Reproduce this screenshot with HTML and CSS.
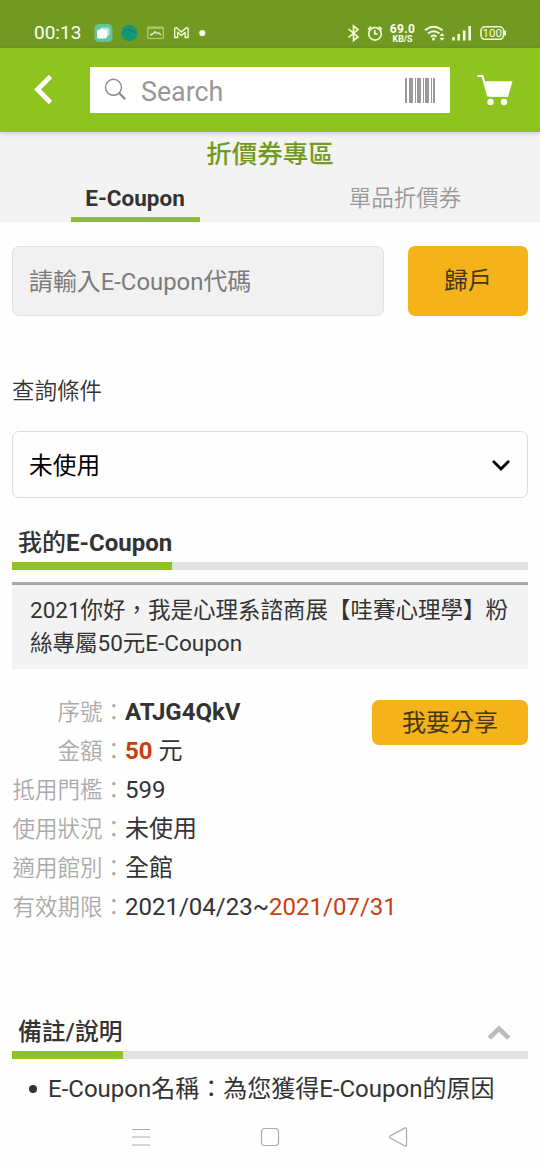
FILE: index.html
```html
<!DOCTYPE html>
<html lang="zh-Hant">
<head>
<meta charset="utf-8">
<title>折價券專區</title>
<link rel="stylesheet" href="styles.css">
</head>
<body>
<div class="statusbar">
  <span class="clock">00:13</span>
  <svg class="notices" width="114" height="20" viewBox="94 23 114 20" fill="none">
    <rect x="94.5" y="24" width="18" height="18" rx="4.5" fill="#62c596"/>
    <rect x="100" y="27.500" width="9.500" height="8.500" rx="2" fill="#b5ecd5"/>
    <rect x="97" y="29.500" width="10" height="9" rx="2" fill="#fff"/>
    <circle cx="129.300" cy="33" r="8.300" fill="#15977a"/>
    <path d="M123 32.500q3-3 5.500-3.500l2.500 2 1.500-.5q2 1 3.300 2" stroke="#2f7f50" stroke-width="1.200"/>
    <rect x="147.800" y="27" width="15.500" height="11.500" rx="1" stroke="#b2d273" stroke-width="1.200"/>
    <path d="M148 28h15" stroke="#b2d273" stroke-width="1.500"/>
    <path d="M150 35q3.500-.5 5-3.500l2 2 1.500-.8 2.500 2.300" stroke="#e5f3c5" stroke-width="1.300"/>
    <path d="M174.700 37.500V28.300l1.500-.8 5.200 4.500 5.200-4.500 1.500.8v9.200h-3v-5.200l-3.700 3.200-3.700-3.200v5.200z" stroke="#f8ffe6" stroke-width="1.300" stroke-linejoin="round"/>
    <circle cx="202.300" cy="33" r="3.100" fill="#fcfff0"/>
  </svg>
  <svg class="radios" width="40" height="20" viewBox="346 23 40 20" fill="none" stroke="#f5ffe0" stroke-width="1.600">
    <path d="M348.500 29l9.500 8-4.500 3.500V26l4.500 3.500-9.500 8"/>
    <circle cx="375" cy="33.800" r="6.300"/>
    <path d="M374.800 30v4h3M368 29.500l3-3M379 26.500l3 3"/>
  </svg>
  <span class="speed"><b>69.0</b><small>KB/S</small></span>
  <svg class="signals" width="84" height="20" viewBox="423 23 84 20" fill="none" stroke="#f5ffe0">
    <path d="M425 30.300q8.500-7.200 17.500 0M428 33.500q5.500-4.700 11.500 0M431 36.700q2.500-2.200 5.500 0" stroke-width="1.900"/>
    <circle cx="433.500" cy="39" r="1.500" fill="#f5ffe0" stroke="none"/>
    <path d="M439.500 36l2.500-3 2.500 3zM439.500 37.800l2.500 3 2.500-3z" fill="#f5ffe0" stroke="none"/>
    <path d="M453.500 37v3.500M458.700 34v6.500M464.200 30.500v10M469.700 26v14.500" stroke-width="2.600"/>
    <rect x="481" y="26.800" width="22.500" height="12.500" rx="4" stroke-width="1.500"/>
    <path d="M505 30.500v5" stroke-width="2"/>
    <text class="battery" x="492.300" y="37.300" text-anchor="middle">100</text>
  </svg>
</div>
<header class="appbar">
  <svg class="back" width="20" height="32" viewBox="0 0 20 32"><path d="M18.500 2.500L5.500 15.500l13 13" fill="none" stroke="#fff" stroke-width="4.800"/></svg>
  <div class="search">
    <svg width="24" height="24" viewBox="0 0 24 24" fill="none" stroke="#8a8a8a"><circle cx="9.500" cy="9.300" r="8" stroke-width="1.400"/><path d="M14.800 14.800l6.500 6.500" stroke-width="2.200"/></svg>
    <span>Search</span>
    <svg class="barcode" width="31" height="25" viewBox="0 0 31 25" fill="#999"><path d="M0 0h2v25H0zM4 0h4v25H4zM10 0h1v25h-1zM12 0h4v25h-4zM18 0h1v25h-1zM20 0h4v25h-4zM26 0h1v25h-1zM28 0h2v25h-2z"/></svg>
  </div>
  <svg class="cart" width="36" height="32" viewBox="477 74 36 32"><path d="M477.500 76h5l5.500 19.500h20" fill="none" stroke="#fff" stroke-width="2.200"/><path d="M484.500 81.300h28l-4.500 15.500h-19z" fill="#fff"/><circle cx="490.500" cy="102" r="3.200" fill="#fff"/><circle cx="504" cy="102" r="3.200" fill="#fff"/></svg>
</header>
<section class="masthead">
  <h1>折價券專區</h1>
  <nav class="tabs">
    <div class="tab"><span class="tab-label active">E-Coupon</span></div>
    <div class="tab"><span class="tab-label">單品折價券</span></div>
  </nav>
</section>
<main>
  <div class="claim">
    <div class="code">請輸入E-Coupon代碼</div>
    <div class="button claim-button">歸戶</div>
  </div>
  <div class="filter-label">查詢條件</div>
  <div class="select">未使用
    <svg width="20" height="14" viewBox="0 0 20 14"><path d="M2.800 2.800L10 10l7.200-7.200" fill="none" stroke="#000" stroke-width="2.800" stroke-linecap="round"/></svg>
  </div>
  <div class="section-title mine"><h2><span>我的</span><b>E-Coupon</b></h2></div>
  <div class="coupon-name">2021你好，我是心理系諮商展【哇賽心理學】粉絲專屬50元E-Coupon</div>
  <div class="details">
    <div class="row"><span class="label">序號：</span><b>ATJG4QkV</b><span class="button share">我要分享</span></div>
    <div class="row"><span class="label">金額：</span><span><b class="red">50</b> 元</span></div>
    <div class="row"><span class="label">抵用門檻：</span><span>599</span></div>
    <div class="row"><span class="label">使用狀況：</span><span>未使用</span></div>
    <div class="row"><span class="label">適用館別：</span><span>全館</span></div>
    <div class="row"><span class="label">有效期限：</span><span>2021/04/23~<span class="red">2021/07/31</span></span></div>
  </div>
  <div class="section-title notes"><h2>備註/說明</h2>
    <svg width="24" height="16" viewBox="0 0 24 16"><path d="M2.200 14.200L12 4.800l9.800 9.400" fill="none" stroke="#bbb" stroke-width="4.600"/></svg>
  </div>
  <div class="note"><i class="dot"></i>E-Coupon名稱：為您獲得E-Coupon的原因</div>
</main>
<footer class="navbar">
  <svg width="20" height="20" viewBox="0 0 20 20"><path d="M1 2.500h18M1 10h18M1 18h18" stroke="#aaa" stroke-width="1.200"/></svg>
  <svg width="20" height="20" viewBox="0 0 20 20"><rect x="1.500" y="1.500" width="17" height="17" rx="3" fill="none" stroke="#aaa" stroke-width="1.200"/></svg>
  <svg width="20" height="20" viewBox="0 0 20 20"><path d="M18.500 2v16q0 1.500-1.500 1L2.200 11q-1.200-1 0-2L17 .9q1.500-.4 1.500 1.100z" fill="none" stroke="#aaa" stroke-width="1.200"/></svg>
</footer>
</body>
</html>
```

FILE: styles.css
```css
* { box-sizing: border-box; }
body {
  margin: 0;
  width: 540px;
  height: 1170px;
  overflow: hidden;
  display: flex;
  flex-direction: column;
  background: #fefefe;
  color: #333;
  font-family: Roboto, "Noto Sans CJK TC", sans-serif;
  font-size: 24px;
  line-height: 36px;
  white-space: nowrap;
}
svg { display: block; flex: none; }
h1, h2 { margin: 0; font-weight: 400; }
.statusbar {
  height: 48px;
  flex: none;
  padding: 18px 0 0 34px;
  display: flex;
  align-items: center;
  background: #729a22;
  color: #fafff0;
}
.clock { width: 60px; font-size: 19px; line-height: 20px; }
.radios { margin-left: 138px; }
.speed {
  width: 37px;
  display: flex;
  flex-direction: column;
  align-items: center;
  gap: 1px;
  padding-right: 4px;
}
.speed b { font-size: 12px; font-weight: 700; letter-spacing: .3px; line-height: 10px; }
.speed small { font-size: 8.8px; font-weight: 700; line-height: 8px; }
.battery { font: 11.5px Roboto, sans-serif; fill: #f5ffe0; stroke: none; }
.appbar {
  height: 84px;
  flex: none;
  display: flex;
  align-items: center;
  padding-left: 32px;
  background: #8ec320;
  position: relative;
  box-shadow: 0 1px 5px rgba(0, 0, 0, .2);
}
.search {
  width: 360px;
  height: 46px;
  margin: 0 27px 0 38px;
  padding: 0 14px;
  display: flex;
  align-items: center;
  background: #fff;
  color: #979797;
  font-size: 26.8px;
}
.search span { margin-left: 13px; padding-top: 3px; }
.barcode { margin-left: auto; }
.masthead { height: 90px; flex: none; background: #f3f3f3; text-align: center; }
.masthead h1 { font-size: 25.5px; line-height: 44px; height: 42px; color: #729a22; font-weight: 500; }
.tabs { display: flex; height: 48px; }
.tab { flex: 1; display: flex; justify-content: center; }
.tab-label { padding: 0 14px; font-size: 22.5px; line-height: 48px; color: #999; font-weight: 350; }
.tab-label.active { width: 129px; border-bottom: 5px solid #8fbd34; font-weight: 700; color: #333; }
main { flex: none; height: 882px; padding: 24px 12px 0; }
.claim { display: flex; gap: 24px; height: 70px; }
.code {
  flex: 1;
  padding-left: 16px;
  border: 1px solid #e2e2e2;
  border-radius: 7px;
  background: #f1f1f1;
  color: #7b7b7b;
  font-size: 23.9px;
  line-height: 70px;
}
.button { background: #f4b319; border-radius: 7px; text-align: center; color: #453716; }
.claim-button { width: 120px; line-height: 71px; }
.filter-label { margin-top: 57px; font-size: 22.5px; font-weight: 350; }
.select {
  height: 67px;
  margin-top: 22px;
  padding: 2px 16px 0;
  display: flex;
  justify-content: space-between;
  align-items: center;
  border: 1px solid #ddd;
  border-radius: 7px;
  color: #000;
  font-size: 23.7px;
}
.section-title {
  display: flex;
  justify-content: space-between;
  align-items: center;
  height: 46px;
  border-bottom: 8px solid #e2e2e2;
}
.section-title h2 {
  height: 46px;
  margin-bottom: -8px;
  padding-left: 6px;
  font-size: 24px;
  line-height: 38px;
  font-weight: 500;
  border-bottom: 8px solid #8ec320;
}
.mine { margin-top: 26px; }
.mine h2 { width: 160px; }
.notes { margin-top: 86px; }
.notes h2 { width: 111px; font-size: 23.8px; }
.notes svg { margin-right: 17px; }
.coupon-name {
  height: 87px;
  margin-top: 12px;
  padding: 9px 18px 0;
  border-top: 3px solid #a8a8a8;
  background: #f3f3f3;
  font-size: 22.5px;
  line-height: 33px;
  white-space: normal;
}
.details { padding-top: 24px; }
.row { display: flex; height: 39px; line-height: 39px; }
.label { width: 113px; text-align: right; font-size: 22.5px; color: #aaa; font-weight: 350; }
.share { width: 156px; height: 45px; line-height: 46px; margin: 7px 0 0 auto; flex: none; }
.red { color: #c63f11; }
.note { display: flex; align-items: center; margin-top: 12px; padding-left: 17px; }
.dot { width: 8px; height: 8px; margin-right: 11px; border-radius: 50%; background: #333; }
.navbar {
  height: 66px;
  flex: none;
  padding: 0 132px 0 131px;
  display: flex;
  justify-content: space-between;
  align-items: center;
  background: #fefefe;
}
```
